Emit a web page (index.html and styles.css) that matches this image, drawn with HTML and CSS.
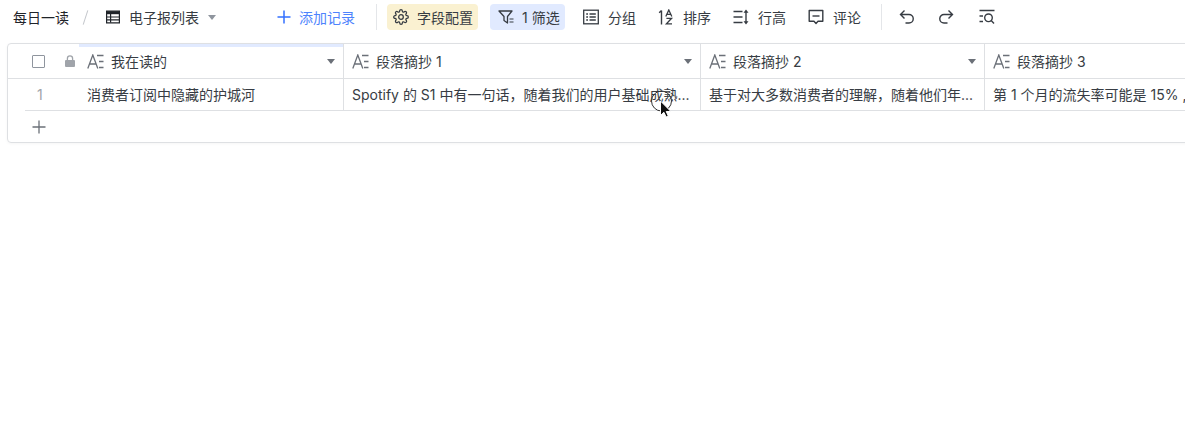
FILE: index.html
```html
<!DOCTYPE html>
<html lang="zh-CN">
<head>
    <meta charset="UTF-8">
    <meta name="viewport" content="width=device-width, initial-scale=1.0">
    <title>每日一读</title>
    <link rel="stylesheet" href="styles.css">
</head>
<body>
    <div class="toolbar">
        <span class="base-name">每日一读</span>
        <span class="slash"></span>
        <svg class="icon view-icon" viewBox="0 0 14 14"><path d="M.6 1.2h12.8v11.6H.6z" fill="none" stroke="#1f2329" stroke-width="1.2"/><path d="M.6 1.2h12.8v3H.6z" fill="#1f2329"/><path d="M1 7h12M1 9.900h12M4.600 4v8.500" stroke="#1f2329" stroke-width="1.200"/></svg>
        <span class="view-name">电子报列表</span>
        <span class="caret"></span>
        <button class="add-btn">
            <svg class="icon" viewBox="0 0 14 14"><path d="M7 .5v13M.5 7h13" stroke="#3370ff" stroke-width="1.500" fill="none"/></svg>
            添加记录
        </button>
        <span class="divider first"></span>
        <button class="pill yellow">
            <svg class="icon" viewBox="0 0 24 24"><path d="M19.4 15a1.65 1.65 0 0 0 .33 1.82l.06.06a2 2 0 0 1 0 2.83 2 2 0 0 1-2.83 0l-.06-.06a1.65 1.65 0 0 0-1.82-.33 1.65 1.65 0 0 0-1 1.51V21a2 2 0 0 1-2 2 2 2 0 0 1-2-2v-.09A1.65 1.65 0 0 0 9 19.4a1.65 1.65 0 0 0-1.82.33l-.06.06a2 2 0 0 1-2.83 0 2 2 0 0 1 0-2.83l.06-.06a1.65 1.65 0 0 0 .33-1.82 1.65 1.65 0 0 0-1.51-1H3a2 2 0 0 1-2-2 2 2 0 0 1 2-2h.09A1.65 1.65 0 0 0 4.600 9a1.65 1.65 0 0 0-.33-1.82l-.06-.06a2 2 0 0 1 0-2.83 2 2 0 0 1 2.83 0l.06.06a1.65 1.65 0 0 0 1.82.33H9a1.65 1.65 0 0 0 1-1.51V3a2 2 0 0 1 2-2 2 2 0 0 1 2 2v.09a1.65 1.65 0 0 0 1 1.51 1.65 1.65 0 0 0 1.82-.33l.06-.06a2 2 0 0 1 2.83 0 2 2 0 0 1 0 2.83l-.06.06a1.65 1.65 0 0 0-.33 1.82V9a1.65 1.65 0 0 0 1.51 1H21a2 2 0 0 1 2 2 2 2 0 0 1-2 2h-.09a1.65 1.65 0 0 0-1.51 1z" fill="none" stroke="#373c43" stroke-width="1.900"/><circle cx="12" cy="12" r="3.500" fill="none" stroke="#373c43" stroke-width="1.900"/></svg>
            字段配置
        </button>
        <button class="pill blue">
            <svg class="icon" viewBox="0 0 16 16"><path d="M1 2h13L9.500 7.500v6.500L6 11.500v-4z" fill="none" stroke="#373c43" stroke-width="1.300" stroke-linejoin="round"/><path d="M11.500 10h4M11.500 13h4" stroke="#373c43" stroke-width="1.200"/></svg>
            1 筛选
        </button>
        <button class="tool group">
            <svg class="icon" viewBox="0 0 16 16"><rect x=".7" y="1.200" width="14.600" height="13.600" fill="none" stroke="#373c43" stroke-width="1.300"/><path d="M3.200 5h1.800M3.200 8h1.800M3.200 11h1.800M6.500 5h6.300M6.500 8h6.300M6.500 11h6.300" stroke="#373c43" stroke-width="1.300"/></svg>
            分组
        </button>
        <button class="tool sort">
            <svg class="icon" viewBox="0 0 16 16"><path d="M3.500 1.500v14M1.200 3.800l2.300-2.300" stroke="#373c43" stroke-width="1.400" fill="none"/><path d="M7.800 7.500l3-6.500 3 6.500M8.800 5.400h4M8.400 9.300h5.200L8.400 14.800h5.600" stroke="#373c43" stroke-width="1.300" fill="none"/></svg>
            排序
        </button>
        <button class="tool height">
            <svg class="icon" viewBox="0 0 16 16"><path d="M.5 2.500h9M.5 8h9M.5 13.500h9" stroke="#373c43" stroke-width="1.400"/><path d="M13 2v12" stroke="#373c43" stroke-width="1.400"/><path d="M13 .5l2.500 3.300h-5zM13 15.500l2.500-3.300h-5z" fill="#373c43"/></svg>
            行高
        </button>
        <button class="tool comment">
            <svg class="icon" viewBox="0 0 16 16"><path d="M1.200 1.500h13.600v10.800H10l-2 2.200-2-2.200H1.200z" fill="none" stroke="#373c43" stroke-width="1.400" stroke-linejoin="round"/><path d="M4.500 7h7" stroke="#373c43" stroke-width="1.400"/></svg>
            评论
        </button>
        <span class="divider second"></span>
        <svg class="icon undo" viewBox="0 0 16 16"><path d="M5.500 1.500L1.500 5.500l4 4M1.500 5.500h8.500a4.200 4.200 0 0 1 0 8.500H6.500" fill="none" stroke="#373c43" stroke-width="1.400"/></svg>
        <svg class="icon redo" viewBox="0 0 16 16"><path d="M10.500 1.500l4 4-4 4M14.500 5.500H6a4.200 4.200 0 0 0 0 8.500h3.500" fill="none" stroke="#373c43" stroke-width="1.400"/></svg>
        <svg class="icon find" viewBox="0 0 16 16"><path d="M.5 1.500h15M.5 7h3.500M.5 12.500h3.500" stroke="#373c43" stroke-width="1.300"/><circle cx="9.500" cy="8.800" r="3.800" fill="none" stroke="#373c43" stroke-width="1.400"/><path d="M12.200 11.600l2.800 2.800" stroke="#373c43" stroke-width="1.400"/></svg>
    </div>

    <div class="sheet">
        <div class="row head">
            <div class="gutter">
                <span class="checkbox"></span>
                <svg class="lock" viewBox="0 0 10 12"><path d="M2.400 5.500V3.400a2.600 2.600 0 0 1 5.200 0v2.100" fill="none" stroke="#a0a4aa" stroke-width="1.300"/><rect x="0" y="5" width="10" height="7" rx="1" fill="#a0a4aa"/></svg>
            </div>
            <div class="cell col-a selected">
                <svg class="type-icon" viewBox="0 0 17 15"><path d="M.8 14.500L5.800 1l5 13.500M2.600 10h6.400" fill="none" stroke="#6b7078" stroke-width="1.300"/><path d="M10 1.500h6.500M12 7.500h4.500M12 13.500h4.500" stroke="#6b7078" stroke-width="1.300"/></svg>
                <span class="title">我在读的</span>
                <span class="menu"></span>
            </div>
            <div class="cell col-b">
                <svg class="type-icon" viewBox="0 0 17 15"><path d="M.8 14.500L5.800 1l5 13.500M2.600 10h6.400" fill="none" stroke="#6b7078" stroke-width="1.300"/><path d="M10 1.500h6.500M12 7.500h4.500M12 13.500h4.500" stroke="#6b7078" stroke-width="1.300"/></svg>
                <span class="title">段落摘抄 1</span>
                <span class="menu"></span>
            </div>
            <div class="cell col-c">
                <svg class="type-icon" viewBox="0 0 17 15"><path d="M.8 14.500L5.800 1l5 13.500M2.600 10h6.400" fill="none" stroke="#6b7078" stroke-width="1.300"/><path d="M10 1.500h6.500M12 7.500h4.500M12 13.500h4.500" stroke="#6b7078" stroke-width="1.300"/></svg>
                <span class="title">段落摘抄 2</span>
                <span class="menu"></span>
            </div>
            <div class="cell col-d">
                <svg class="type-icon" viewBox="0 0 17 15"><path d="M.8 14.500L5.800 1l5 13.500M2.600 10h6.400" fill="none" stroke="#6b7078" stroke-width="1.300"/><path d="M10 1.500h6.500M12 7.500h4.500M12 13.500h4.500" stroke="#6b7078" stroke-width="1.300"/></svg>
                <span class="title">段落摘抄 3</span>
            </div>
        </div>
        <div class="row body-row">
            <div class="gutter"><span class="row-no">1</span></div>
            <div class="cell col-a"><span class="text">消费者订阅中隐藏的护城河</span></div>
            <div class="cell col-b"><span class="text">Spotify 的 S1 中有一句话，随着我们的用户基础成熟...</span></div>
            <div class="cell col-c"><span class="text">基于对大多数消费者的理解，随着他们年...</span></div>
            <div class="cell col-d"><span class="text">第 1 个月的流失率可能是 15% ,</span></div>
        </div>
        <div class="add-row">
            <svg class="plus" viewBox="0 0 14 14"><path d="M7 .5v13M.5 7h13" stroke="#6b7078" stroke-width="1.300" fill="none"/></svg>
        </div>
        <svg class="cursor" viewBox="0 0 24 28">
            <circle cx="10.500" cy="11" r="10" fill="none" stroke="#333" stroke-width="1"/>
            <path d="M9.500 11v14.500l3.400-3.200 2.200 4.700 2.200-1-2.100-4.500h4.700z" fill="#111" stroke="#fff" stroke-width="1"/>
        </svg>
    </div>
</body>
</html>
```

FILE: styles.css
```css
body {
    margin: 0;
    height: 425px;
    overflow: hidden;
    background-color: #ffffff;
    color: #373c43;
    font-family: Inter, "Noto Sans CJK SC", sans-serif;
    font-size: 14px;
}

.icon {
    width: 16px;
    height: 16px;
    flex: none;
}

/* 顶部工具栏 */
.toolbar {
    display: flex;
    align-items: center;
    height: 26px;
    padding: 4px 0 5px 13px;
}

.toolbar button {
    display: flex;
    align-items: center;
    height: 26px;
    padding: 0;
    border: none;
    background: none;
    color: #373c43;
    font: inherit;
    white-space: nowrap;
}

.base-name {
    flex: none;
    width: 56px;
    color: #1f2329;
    white-space: nowrap;
}

.slash {
    flex: none;
    width: 1px;
    height: 15px;
    margin: 0 20px 0 16px;
    background-color: #c4c7cc;
    transform: rotate(18deg);
}

.view-icon {
    width: 14px;
    height: 14px;
    margin-right: 9px;
}

.view-name {
    flex: none;
    width: 70px;
    white-space: nowrap;
}

.caret {
    flex: none;
    width: 0;
    height: 0;
    margin: 1px 0 0 9px;
    border-left: 4px solid transparent;
    border-right: 4px solid transparent;
    border-top: 5px solid #8f959e;
}

.toolbar .add-btn {
    width: 78px;
    margin-left: 61px;
    gap: 8px;
    color: #4e83fd;
}

.add-btn .icon {
    width: 14px;
    height: 14px;
}

.divider {
    flex: none;
    width: 1px;
    height: 26px;
    background-color: #e4e6e9;
}

.divider.first {
    margin: 0 10px 0 21px;
}

.divider.second {
    margin: 0 17px 0 20px;
}

.toolbar .pill {
    flex: none;
    border-radius: 4px;
}

.toolbar .yellow {
    width: 91px;
    padding-left: 6px;
    gap: 8px;
    background-color: #faf1d1;
}

.toolbar .blue {
    width: 75px;
    margin-left: 12px;
    padding-left: 8px;
    gap: 8px;
    background-color: #e1eaff;
}

.toolbar .tool {
    flex: none;
    gap: 9px;
}

.toolbar .group {
    margin-left: 18px;
}

.toolbar .sort,
.toolbar .height,
.toolbar .comment {
    margin-left: 22px;
}

.redo {
    margin-left: 23px;
}

.find {
    margin-left: 25px;
}

/* 表格 */
.sheet {
    position: relative;
    width: 1240px;
    margin: 8px 0 0 7px;
    border: 1px solid #dee0e3;
    border-radius: 4px;
    box-shadow: 0 1px 3px rgba(0, 0, 0, 0.04);
}

.row {
    display: grid;
    grid-template-columns: 71px 265px 357px 284px 1fr;
}

.head {
    height: 34px;
    border-bottom: 1px solid #dee0e3;
}

.body-row {
    position: relative;
    height: 31px;
    border-bottom: 1px solid #dee0e3;
    margin-left: 17px;
    grid-template-columns: 54px 265px 357px 284px 1fr;
}

.gutter {
    display: flex;
    align-items: center;
}

.checkbox {
    width: 11px;
    height: 11px;
    margin-left: 24px;
    border: 1.500px solid #8f959e;
    border-radius: 1px;
}

.lock {
    width: 10px;
    height: 12px;
    margin-left: 20px;
}

.row-no {
    margin-left: 12px;
    padding-bottom: 1px;
    color: #a0a4aa;
}

.cell {
    display: flex;
    align-items: center;
    min-width: 0;
    padding: 0 8px;
    border-right: 1px solid #dee0e3;
}

.col-d {
    border-right: none;
}

.head .selected {
    box-shadow: inset 0 3px 0 #e1eaff;
}

.type-icon {
    width: 17px;
    height: 15px;
    flex: none;
    margin-right: 7px;
}

.title {
    flex: 1;
    padding-bottom: 1px;
    white-space: nowrap;
}

.menu {
    width: 0;
    height: 0;
    border-left: 4px solid transparent;
    border-right: 4px solid transparent;
    border-top: 5px solid #6b7078;
}

.text {
    padding-bottom: 2px;
    white-space: nowrap;
}

.add-row {
    display: flex;
    align-items: center;
    height: 31px;
    padding-left: 24px;
}

.plus {
    width: 14px;
    height: 14px;
}

/* 录屏里的鼠标 */
.cursor {
    position: absolute;
    left: 643px;
    top: 46px;
    width: 24px;
    height: 28px;
}
```
